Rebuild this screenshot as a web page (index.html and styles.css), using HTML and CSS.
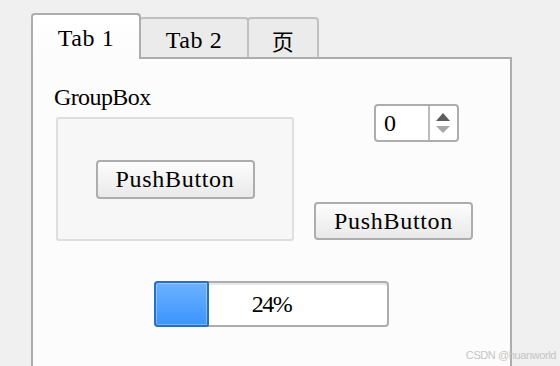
FILE: index.html
```html
<!DOCTYPE html>
<html>
<head>
<title>Tab Widget</title>
<link rel="stylesheet" href="styles.css">
</head>
<body>

<div id="window">
    <div class="tab-bar">
        <div class="tab tab-active">Tab 1</div>
        <div class="tab">Tab 2</div>
        <div class="tab tab-narrow cjk">页</div>
    </div>

    <div class="tab-pane">
        <div class="top-row">
            <div class="group">
                <div class="group-title">GroupBox</div>
                <div class="group-frame">
                    <button class="push-button">PushButton</button>
                </div>
            </div>
            <div class="side">
                <div class="spin-box">
                    <span class="spin-value">0</span>
                    <span class="spin-arrows">
                        <span class="arrow-up"></span>
                        <span class="arrow-down"></span>
                    </span>
                </div>
                <button class="push-button">PushButton</button>
            </div>
        </div>

        <div class="progress">
            <div class="progress-chunk" style="width: 24%"></div>
            <div class="progress-text">24%</div>
        </div>
    </div>
</div>

<div class="watermark">CSDN @huanworld</div>

</body>
</html>
```

FILE: styles.css
```css
body {
    margin: 0;
    background: #f0f0f0;
    font-family: "Liberation Serif", "Times New Roman", serif;
    font-size: 24px;
    color: #000;
    overflow: hidden;
    height: 366px;
}
.cjk {
    font-family: "Noto Sans CJK SC", sans-serif;
}
#window {
    padding-top: 13px;
}
.tab-bar {
    display: flex;
    align-items: flex-end;
    padding-left: 31px;
    height: 44px;
}
.tab {
    box-sizing: border-box;
    width: 110px;
    height: 40px;
    margin-left: -2px;
    padding-top: 9px;
    line-height: 24px;
    text-align: center;
    letter-spacing: 0.6px;
    background: #ebebeb;
    border: 2px solid #c0c0c0;
    border-bottom: none;
    border-radius: 4px 4px 0 0;
}
.tab-bar .tab:first-child {
    margin-left: 0;
}
.tab-active {
    position: relative;
    z-index: 1;
    height: 46px;
    margin-bottom: -2px;
    padding-top: 11px;
    background: linear-gradient(#ffffff, #fcfcfc);
    border-color: #adadad;
}
.tab-narrow {
    width: 72px;
    font-size: 22px;
}
.tab-pane {
    box-sizing: border-box;
    width: 481px;
    height: 309px;
    margin-left: 31px;
    padding: 26px 0 0 21px;
    background: #fcfcfc;
    border: 2px solid #adadad;
    border-bottom: none;
}
.top-row {
    display: flex;
    gap: 20px;
}
.group {
    width: 240px;
}
.group-title {
    line-height: 24px;
    letter-spacing: -0.6px;
}
.group-frame {
    box-sizing: border-box;
    height: 124px;
    margin: 8px 0 0 2px;
    display: flex;
    align-items: center;
    justify-content: center;
    background: #f7f7f7;
    border: 2px solid #dedede;
    border-radius: 3px;
}
.push-button {
    box-sizing: border-box;
    width: 159px;
    height: 39px;
    padding: 0;
    font: inherit;
    line-height: 24px;
    letter-spacing: 0.7px;
    color: #000;
    background: linear-gradient(#fdfdfd, #e9e9e9);
    border: 2px solid #adadad;
    border-radius: 4px;
}
.side {
    display: flex;
    flex-direction: column;
    width: 159px;
}
.side .push-button {
    height: 38px;
    margin-top: 60px;
}
.spin-box {
    box-sizing: border-box;
    display: flex;
    width: 85px;
    height: 38px;
    margin: 19px 0 0 60px;
    background: #fff;
    border: 2px solid #adadad;
    border-radius: 4px;
}
.spin-value {
    width: 44px;
    padding-left: 8px;
    line-height: 34px;
}
.spin-arrows {
    flex: 1;
    display: flex;
    flex-direction: column;
    align-items: center;
    justify-content: center;
    gap: 5px;
    padding-right: 2px;
    border-left: 2px solid #bcbcbc;
}
.arrow-up {
    border-left: 7px solid transparent;
    border-right: 7px solid transparent;
    border-bottom: 8px solid #5c5c5c;
}
.arrow-down {
    border-left: 7px solid transparent;
    border-right: 7px solid transparent;
    border-top: 7px solid #a8a8a8;
}
.progress {
    box-sizing: border-box;
    display: grid;
    width: 235px;
    height: 46px;
    margin: 40px 0 0 100px;
    background: #fff;
    border: 2px solid #adadad;
    border-radius: 4px;
    box-shadow: inset 0 2px 0 #e8e8e8;
}
.progress-chunk {
    box-sizing: border-box;
    grid-area: 1 / 1;
    margin: -2px;
    background: linear-gradient(#6cb2ff, #3b94ff);
    border: 2px solid #2a6fc0;
    border-radius: 4px 2px 2px 4px;
    box-shadow: inset 0 0 0 1px rgba(255, 255, 255, 0.3);
}
.progress-text {
    grid-area: 1 / 1;
    place-self: center;
    line-height: 24px;
    letter-spacing: -1.5px;
}
.watermark {
    position: absolute;
    right: 4px;
    bottom: 5px;
    font-family: "Liberation Sans", sans-serif;
    font-size: 11px;
    letter-spacing: -0.4px;
    color: #c4c4c4;
}
```
